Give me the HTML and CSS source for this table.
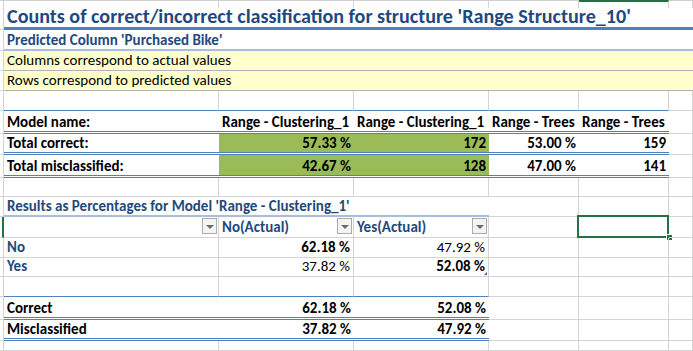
FILE: index.html
```html
<!DOCTYPE html>
<html>
<head>
<meta charset="utf-8">
<link rel="stylesheet" href="styles.css">
</head>
<body>
<div class="sheet">
  <!-- row 0 -->
  <div class="c h r0"></div><div class="c r0"></div><div class="c r0"></div><div class="c r0"></div><div class="c r0"></div><div class="c r0 hsel"></div><div class="c r0"></div>
  <!-- title -->
  <div class="c h"></div><div class="c span-all title">Counts of correct/incorrect classification for structure 'Range Structure_10'</div>
  <div class="c h"></div><div class="c span-all h3">Predicted Column 'Purchased Bike'</div>
  <div class="c h"></div><div class="c span-all note">Columns correspond to actual values</div>
  <div class="c h"></div><div class="c span-all note">Rows correspond to predicted values</div>
  <!-- empty above model table -->
  <div class="c h"></div><div class="c bt"></div><div class="c bt"></div><div class="c bt"></div><div class="c bt"></div><div class="c bt"></div><div class="c"></div>
  <!-- model table -->
  <div class="c h"></div><div class="c tot">Model name:</div><div class="c tot">Range - Clustering_1</div><div class="c tot">Range - Clustering_1</div><div class="c tot">Range - Trees</div><div class="c tot">Range - Trees</div><div class="c"></div>
  <div class="c h"></div><div class="c tot">Total correct:</div><div class="c tot num green">57.33 %</div><div class="c tot num green">172</div><div class="c tot num">53.00 %</div><div class="c tot num">159</div><div class="c"></div>
  <div class="c h"></div><div class="c tot">Total misclassified:</div><div class="c tot num green">42.67 %</div><div class="c tot num green">128</div><div class="c tot num">47.00 %</div><div class="c tot num">141</div><div class="c"></div>
  <!-- empty -->
  <div class="c h"></div><div class="c"></div><div class="c"></div><div class="c"></div><div class="c"></div><div class="c"></div><div class="c"></div>
  <!-- results heading -->
  <div class="c h"></div><div class="c span-3 h3b">Results as Percentages for Model 'Range - Clustering_1'</div><div class="c"></div><div class="c"></div><div class="c"></div>
  <!-- table header -->
  <div class="c h rsel"></div>
  <div class="c th"><span class="filter"></span></div>
  <div class="c th"><span class="tht">No(Actual)</span><span class="filter"></span></div>
  <div class="c th"><span class="tht">Yes(Actual)</span><span class="filter"></span></div>
  <div class="c"></div><div class="c selcell"><span class="selbox"></span><span class="selhandle"></span></div><div class="c"></div>
  <!-- rows -->
  <div class="c h"></div><div class="c rowlab">No</div><div class="c num b">62.18 %</div><div class="c num">47.92 %</div><div class="c"></div><div class="c"></div><div class="c"></div>
  <div class="c h"></div><div class="c rowlab">Yes</div><div class="c num">37.82 %</div><div class="c num b resz">52.08 %<span class="rhandle"></span></div><div class="c"></div><div class="c"></div><div class="c"></div>
  <!-- empty -->
  <div class="c h"></div><div class="c bt"></div><div class="c bt"></div><div class="c bt"></div><div class="c"></div><div class="c"></div><div class="c"></div>
  <!-- totals -->
  <div class="c h"></div><div class="c tot">Correct</div><div class="c tot num">62.18 %</div><div class="c tot num">52.08 %</div><div class="c"></div><div class="c"></div><div class="c"></div>
  <div class="c h"></div><div class="c tot">Misclassified</div><div class="c tot num">37.82 %</div><div class="c tot num">47.92 %</div><div class="c"></div><div class="c"></div><div class="c"></div>
  <!-- last -->
  <div class="c h"></div><div class="c"></div><div class="c"></div><div class="c"></div><div class="c"></div><div class="c"></div><div class="c"></div>
</div>
</body>
</html>
```
FILE: styles.css
```css
html, body {
  margin: 0;
  padding: 0;
  background: #ffffff;
}

.sheet {
  width: 693px;
  height: 351px;
  overflow: hidden;
  display: grid;
  grid-template-columns: 4px 215px 135px 135px 90px 90px 1fr;
  grid-template-rows: 8px 22px 21px 20px 20px 20px 23px 21px 23px 19px 20px 21px 20px 19px 20px 23px 21px 1fr;
  font-family: Carlito, Lato, sans-serif;
  font-size: 15px;
  color: #000000;
}

.c {
  box-sizing: border-box;
  border-right: 1px solid #d4d4d4;
  border-bottom: 1px solid #d4d4d4;
  display: flex;
  align-items: flex-end;
  padding: 0 3px 2px 3px;
  white-space: nowrap;
  min-width: 0;
  line-height: 16px;
  position: relative;
}

.h {
  padding: 0;
}

.r0 {
  border-top: 1px solid #cfcfcf;
  border-bottom: none;
}

.r0.hsel {
  border-top: 2px solid #217346;
}

.rsel {
  border-right: 2px solid #217346;
}

.span-all {
  grid-column: 2 / -1;
  border-right: none;
}

.span-3 {
  grid-column: 2 / 5;
  border-right: none;
}

.title {
  font-size: 20.1px;
  font-weight: bold;
  color: #1f497d;
  border-bottom: 3px solid #4f81bd;
  padding-bottom: 1px;
  line-height: 20px;
}

.h3 {
  font-weight: bold;
  color: #1f497d;
  border-bottom: 2px solid #a7bfde;
  padding-bottom: 1px;
}

.h3b {
  font-weight: bold;
  color: #1f497d;
  border-bottom: 2px solid #a7bfde;
  padding-bottom: 1px;
}

.note {
  background: #ffffcc;
  border-bottom: 1px solid #b2b2b2;
}

.bt {
  border-bottom: 1px solid #4f81bd;
}

.tot {
  font-weight: bold;
  border-right: none;
  border-bottom: 3px double #4f81bd;
  padding-bottom: 1px;
}

.green {
  background: #9bbb59;
  background-clip: padding-box;
}

.num {
  justify-content: flex-end;
}

.b {
  font-weight: bold;
}

.rowlab {
  font-weight: bold;
  color: #1f497d;
}

.th {
  font-weight: bold;
  color: #1f497d;
  align-items: stretch;
  padding: 1px 1px 2px 3px;
}

.tht {
  align-self: flex-end;
}

.filter {
  margin-left: auto;
  width: 15px;
  height: 16px;
  box-sizing: border-box;
  border: 1px solid #acacac;
  background: #f4f4f4;
  position: relative;
}

.filter::after {
  content: "";
  position: absolute;
  left: 3px;
  top: 6px;
  border-left: 4px solid transparent;
  border-right: 4px solid transparent;
  border-top: 4px solid #6b6b6b;
}

.selbox {
  position: absolute;
  left: -2px;
  top: -2px;
  width: 92px;
  height: 23px;
  box-sizing: border-box;
  border: 2px solid #217346;
}

.selhandle {
  position: absolute;
  right: -4px;
  bottom: -3px;
  width: 5px;
  height: 5px;
  background: #217346;
  box-shadow: 0 0 0 1px #ffffff;
}

.rhandle {
  position: absolute;
  right: 1px;
  bottom: 1px;
  width: 0;
  height: 0;
  border-left: 3px solid transparent;
  border-bottom: 3px solid #3b5ea8;
}
```
